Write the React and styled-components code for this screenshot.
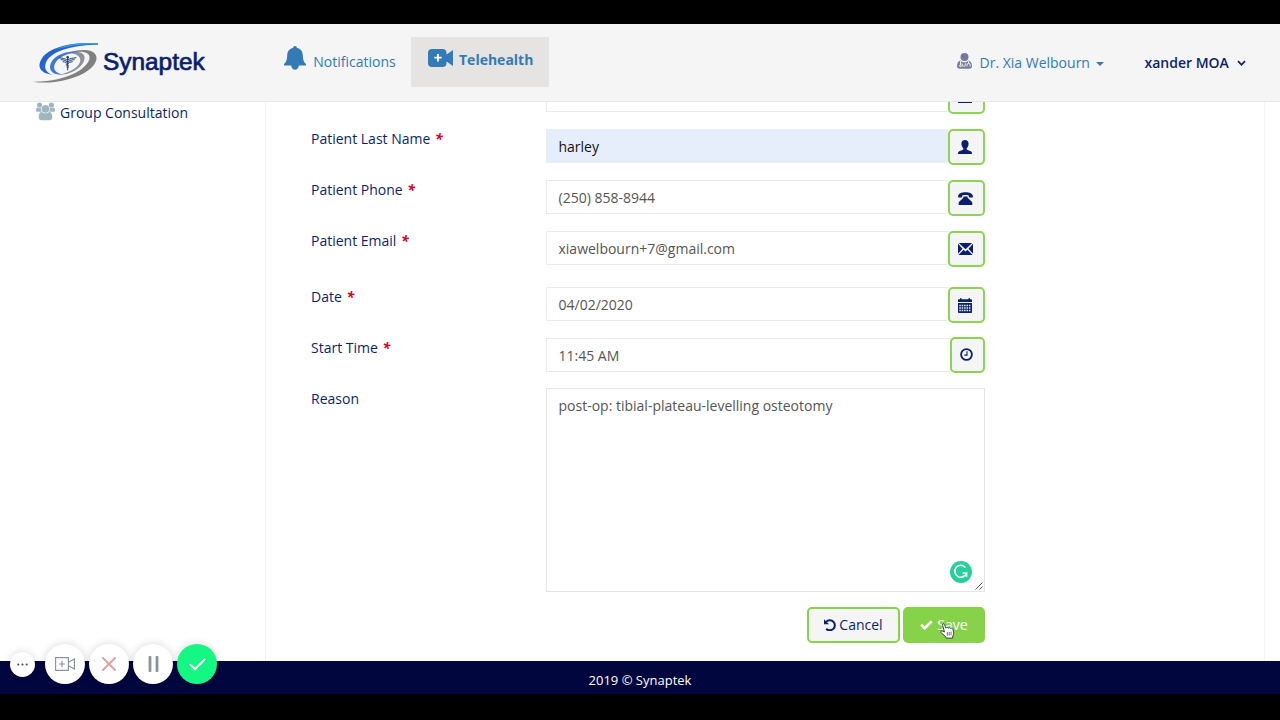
import React from "react";
import styled, { createGlobalStyle } from "styled-components";

const Global = createGlobalStyle`
  * { box-sizing: border-box; }
  body { margin: 0; background: #000; font-family: "Open Sans", "Noto Sans", sans-serif; font-size: 14px; line-height: 20px; color: #0a1f70; }
  svg { display: block; flex: none; }
`;

const Page = styled.div`
  width: 1280px; height: 720px; padding: 24px 0 26px;
  display: flex; flex-direction: column; overflow: hidden; background: #000;
`;
const Header = styled.header`
  height: 78px; flex: none; display: flex; align-items: flex-start;
  background: #f5f5f5; border-bottom: 1px solid #e6e8e8; padding-left: 32px;
`;
const Brand = styled.div`
  display: flex; width: 252px; padding-top: 17px;
`;
const BrandName = styled.span`
  font: 24.4px/42px "Liberation Sans", Arial, sans-serif; color: #0a1f70;
  -webkit-text-stroke: 0.7px #0a1f70; margin-left: 5px;
`;
const NavItem = styled.a`
  display: flex; height: 50px; margin-top: 13px; color: #337ab7;
  width: ${(p) => (p.$active ? 138 : 127)}px;
  padding: ${(p) => (p.$active ? "12px 0 0 17px" : "9px 0 0 0")};
  background: ${(p) => (p.$active ? "#e5e4e2" : "transparent")};
  font-weight: ${(p) => (p.$active ? 700 : 400)};
`;
const NavText = styled.span`
  margin-left: ${(p) => p.$left}px; margin-top: ${(p) => p.$top}px; white-space: nowrap;
`;
const DoctorMenu = styled.div`
  display: flex; margin-left: 408px; margin-top: 29px; width: 187.500px; color: #337ab7;
`;
const DoctorName = styled.span`margin: 0 6px 0 7.500px; white-space: nowrap;`;
const Caret = styled.i`
  width: 0; height: 0; margin-top: 9px; border: 4px solid transparent; border-top-color: #337ab7; border-bottom: 0;
`;
const UserMenu = styled.div`
  display: flex; margin-top: 29px; font-weight: 600; gap: 8px; white-space: nowrap;
`;
const Body = styled.main`
  flex: 1; min-height: 0; display: flex; background: #fff; overflow: hidden;
`;
const Sidebar = styled.aside`
  width: 266px; border-right: 1px solid #f1f1f1; padding-left: 36px;
`;
const SideLink = styled.a`display: flex; gap: 5px; line-height: 22px;`;
const Content = styled.section`
  width: 999px; border-right: 1px solid #f4f4f4; padding-left: 45px;
`;
const Form = styled.form`
  width: 674px; margin-top: -24px; display: flex; flex-direction: column;
`;
const Row = styled.div`
  display: flex; height: ${(p) => p.$h || 51}px; flex: none;
`;
const Label = styled.label`width: 235px; flex: none;`;
const Star = styled.span`
  color: #d8001d; font-weight: 700; font-style: italic; margin-left: 1px;
`;
const Field = styled.div`
  flex: 1; height: 34px; padding: 7px 11.500px 0; border: 1px solid #e9eaec; border-right: 0;
  color: ${(p) => (p.$filled ? "#111" : "#555")};
  background: ${(p) => (p.$filled ? "#e6eefc" : "#fff")};
  ${(p) => p.$filled && "border-color: #e6eefc;"}
`;
const Addon = styled.button`
  width: ${(p) => (p.$narrow ? 35.5 : 37.5)}px; height: 36px; flex: none;
  padding: ${(p) => (p.$narrow ? "0 1px 1px 0" : "0 2px 0 0")};
  margin: ${(p) => (p.$narrow ? "-1px 0 0 0" : "0")};
  border: 2px solid #8dd454; border-radius: 5px; background: #f5f5f5; color: #0a1f70;
  display: flex; align-items: center; justify-content: center;
`;
const TextBox = styled.div`
  position: relative; flex: 1; height: 204px; margin-top: -1px; padding: 6.500px 11.500px; border: 1px solid #e3e5e9; color: #555;
`;
const Assistant = styled.span`position: absolute; right: 12px; bottom: 8px;`;
const Grip = styled.span`position: absolute; right: 1px; bottom: 1px;`;
const Actions = styled.div`
  display: flex; justify-content: flex-end; gap: 3px; margin-top: 15px;
`;
const Action = styled.button`
  position: relative; font: inherit; height: 36px; padding: 0; border-radius: 5px; border: 2px solid #86d34a;
  display: flex; align-items: center; justify-content: center; gap: ${(p) => (p.$primary ? 4 : 3)}px;
  width: ${(p) => (p.$primary ? 82 : 93)}px;
  background: ${(p) => (p.$primary ? "#86d34a" : "#f5f5f5")};
  color: ${(p) => (p.$primary ? "#fff" : "#0a1f70")};
`;
const Pointer = styled.span`position: absolute; left: 35px; top: 14px;`;
const Footer = styled.footer`
  position: relative; height: 33px; flex: none; background: #02063f; color: #fff; text-align: center; line-height: 38px; font-size: 13px;
`;
const Recorder = styled.div`
  position: absolute; left: 10px; top: -17px; display: flex; align-items: center; gap: 4px;
`;
const Round = styled.span`
  width: ${(p) => p.$size || 40}px; height: ${(p) => p.$size || 40}px; border-radius: 50%;
  margin-right: ${(p) => (p.$size ? 6 : 0)}px;
  background: ${(p) => p.$bg || "#fff"}; box-shadow: 0 0 8px rgba(0,0,0,.16);
  display: flex; align-items: center; justify-content: center;
`;

const Logo = () => (
  <svg width="66" height="43" viewBox="36 63 198 129">
    <path d="M38 185C90 194 165 181 206 150C240 124 238 92 195 90C176 89 155 94 139 101C161 95 191 92 203 101C217 112 203 135 182 149C142 176 84 186 38 185Z" fill="#808080" />
    <path d="M139 101C173 88 199 98 193 119C186 145 151 164 118 164C157 156 181 137 181 120C180 104 160 99 139 101Z" fill="#909195" />
    <path d="M235 70C159 64 89 81 67 113C49 139 59 160 98 165C77 157 70 143 80 123C98 89 171 74 235 74Z" fill="#2563d0" />
    <path d="M176 95C137 90 97 108 91 134C86 153 101 165 127 164C105 158 99 148 104 133C111 112 142 99 176 95Z" fill="#3c76dc" />
    <path d="M106 88C137 73 187 66 235 70L235 73C187 72 148 78 106 88Z" fill="#35a1df" />
    <g fill="none" stroke="#234079" strokeWidth="3">
      <path d="M143 113V151M117 113C127 115 135 115 142 121C150 114 159 115 169 113M122 119C130 119 136 121 142 126C149 121 156 119 164 119M128 125C135 125 138 128 142 131C147 127 151 126 158 125" />
      <path d="M137 132C149 134 149 139 139 142M147 130C135 133 137 139 147 142" strokeWidth="2" />
    </g>
    <circle cx="143" cy="112" r="4" fill="#234079" />
  </svg>
);
const Bell = () => (
  <svg width="22" height="24" viewBox="0 0 22 24" fill="currentColor">
    <path d="M11 0c1.200 0 2 .8 1.900 1.900C17 2.600 18.700 5.600 18.800 9.500c.1 4 .8 6.500 3.200 8.500v1.500H14.800c-.2 2.500-1.700 4.200-3.800 4.200s-3.600-1.700-3.800-4.200H0V18c2.400-2 3.100-4.500 3.200-8.500C3.300 5.600 5 2.600 9.100 1.900 9 .8 9.800 0 11 0z" />
  </svg>
);
const CameraPlus = () => (
  <svg width="25" height="18" viewBox="0 0 25 18">
    <path d="M4 0h10.500a4 4 0 0 1 4 4v1.600L25 1v16l-6.500-4.600V14a4 4 0 0 1-4 4H4a4 4 0 0 1-4-4V4a4 4 0 0 1 4-4z" fill="currentColor" />
    <path d="M10 5v7.400M6.300 8.700h7.400" stroke="#fff" strokeWidth="1.800" />
  </svg>
);
const Doctor = () => (
  <svg width="15" height="16" viewBox="0 0 15 16">
    <circle cx="7.500" cy="4" r="4" fill="#75779c" />
    <path d="M3.500 7.400C1 8.200 0 10.300 0 13c0 1.700.9 2.700 2.600 2.700h9.800c1.700 0 2.600-1 2.600-2.700 0-2.700-1-4.800-3.500-5.600-1.200 1.300-2.600 1.800-4 1.800s-2.800-.5-4-1.800z" fill="#7c7e98" />
    <g fill="none" stroke="#f5f5f5" strokeWidth="1"><path d="M3.600 8v4M6.200 13.800L5 10.500M7.500 13.800l1.200-3.400M10 13.400v-1.400a1.600 1.600 0 0 1 3.200 0v1.400M11.600 8v2.400" /><circle cx="3.500" cy="12.800" r=".9" /></g>
  </svg>
);
const Group = () => (
  <svg width="19" height="19" viewBox="0 -.5 19 19" fill="#9fb6c1">
    <circle cx="3.600" cy="2.600" r="2.600" /><circle cx="15.400" cy="2.600" r="2.600" />
    <path d="M0 8.300c0-2 .6-3.200 1.700-3.200.9.700 2.700.9 3.700.2-.6 1.500-.2 3 .6 4H2C.7 9.300 0 9 0 8.300zM19 8.300c0-2-.6-3.200-1.700-3.200-.9.700-2.700.9-3.700.2.600 1.500.2 3-.6 4h4c1.300 0 2-.3 2-1z" />
    <circle cx="9.500" cy="6.400" r="3.800" />
    <path d="M5.600 9.300C3.300 9.800 2.700 12 2.700 14.700c0 2 1 3 2.900 3h7.800c1.900 0 2.900-1 2.900-3 0-2.700-.6-4.900-2.900-5.400-2.300 2-5.500 2-7.800 0z" />
  </svg>
);
const Person = () => (
  <svg width="14" height="14" viewBox="0 0 14 14" fill="currentColor">
    <path d="M7 0c2.300 0 3.600 1.500 3.600 3.800 0 1.900-.8 3.500-1.900 4.500v1.200c1 .7 3.300 1.300 4.500 2.100.6.500.8 1.200.8 2.400H0c0-1.200.2-1.900.8-2.400 1.200-.8 3.500-1.400 4.500-2.100V8.300c-1.100-1-1.900-2.600-1.900-4.500C3.400 1.500 4.700 0 7 0z" />
  </svg>
);
const Phone = () => (
  <svg width="15" height="13" viewBox="0 0 15 13" fill="currentColor">
    <path d="M0 4.500C.4 1.300 3.500.2 7.500.2s7.100 1.100 7.500 4.300c0 .7-.3 1-1 1h-2.300c-.6 0-.9-.3-.9-.9V3.400C8.700 2.800 6.300 2.800 4.200 3.400v1.200c0 .6-.3.900-.9.900H1c-.7 0-1-.3-1-1zM5.400 4.500h4.200v1.200l4.200 4c.4.400.5.700.5 1.200V13H.7v-2.100c0-.5.1-.8.500-1.200l4.200-4z" />
  </svg>
);
const Mail = () => (
  <svg width="15" height="12" viewBox="0 0 15 11" preserveAspectRatio="none" fill="currentColor">
    <path d="M.8 0h13.400L7.500 5.800zM0 .8l4.500 4.500L0 9.900zM15 .8v9.100l-4.500-4.600zM.5 11l5-4.700 2 1.600 2-1.600 5 4.700z" />
  </svg>
);
const Calendar = () => (
  <svg width="14" height="15" viewBox="0 0 14 15">
    <path d="M0 4V2.500C0 1.800.5 1.300 1.200 1.300H2V.8C2 .3 2.300 0 2.800 0s.8.300.8.800v.5h6.800V.8c0-.5.3-.8.8-.8s.8.300.8.800v.5h.8c.7 0 1.200.5 1.200 1.200V4zM0 5h14v9.200c0 .5-.3.800-.8.800H.8c-.5 0-.8-.3-.8-.8z" fill="currentColor" />
    <path d="M1.300 7.500h11.400M1.300 10h11.400M1.300 12.500h11.400" stroke="#f5f5f5" strokeWidth="1.400" strokeDasharray="1.500 .9" />
  </svg>
);
const Clock = () => (
  <svg width="13" height="13" viewBox="0 0 13 13" fill="none" stroke="currentColor">
    <circle cx="6.500" cy="6.500" r="5.400" strokeWidth="1.800" /><path d="M7 3.200v3.900H4.300" strokeWidth="1.100" />
  </svg>
);
const Undo = () => (
  <svg width="12" height="12" viewBox="0 0 12 12" fill="none" stroke="currentColor">
    <path d="M2.200 2.900A5 5 0 1 1 2.200 9.700" strokeWidth="2" /><path d="M0 .3v5h5z" fill="currentColor" stroke="none" />
  </svg>
);
const Check = () => (
  <svg width="13" height="10" viewBox="0 0 13 10"><path d="M1.200 4.800l3.500 3.400L11.700 1.300" fill="none" stroke="#fff" strokeWidth="2.700" /></svg>
);
const Hand = () => (
  <svg width="15" height="16" viewBox="0 0 15 16">
    <path d="M4.500 9L2.600 2.200C2.200.7 4 .2 4.500 1.600L5.900 5.200C6.500 4 8 4.100 8.300 5.200 9 4.200 10.500 4.500 10.700 5.600c1-.8 2.100-.2 2.300.9l.7 3.300c.2 1.200-.3 2-.8 3l-.3 2.300H6.100L5.700 13.600 1.200 9.900C-.1 8.600 1.300 7.300 2.700 8.200z" fill="#fff" stroke="#333" strokeWidth=".9" />
    <path d="M7.300 9v3.700M9.200 8.900v3.700M11 8.700v3.700" stroke="#333" strokeWidth=".7" />
  </svg>
);

const ROWS = [
  { id: "first", value: "", icon: <Person /> },
  { id: "last", label: "Patient Last Name", value: "harley", icon: <Person />, filled: true },
  { id: "phone", label: "Patient Phone", value: "(250) 858-8944", icon: <Phone /> },
  { id: "email", label: "Patient Email", value: "xiawelbourn+7@gmail.com", icon: <Mail />, h: 56 },
  { id: "date", label: "Date", value: "04/02/2020", icon: <Calendar /> },
  { id: "time", label: "Start Time", value: "11:45 AM", icon: <Clock />, narrow: true },
];

export default function App() {
  return (
    <Page>
      <Global />
      <Header>
        <Brand><Logo /><BrandName>Synaptek</BrandName></Brand>
        <NavItem><Bell /><NavText $top={6} $left={7.3}>Notifications</NavText></NavItem>
        <NavItem $active><CameraPlus /><NavText $top={1} $left={6}>Telehealth</NavText></NavItem>
        <DoctorMenu><Doctor /><DoctorName>Dr. Xia Welbourn</DoctorName><Caret /></DoctorMenu>
        <UserMenu>
          xander MOA
          <svg width="9" height="20" viewBox="0 0 9 20"><path d="M1 8.200l3.500 3.600L8 8.200" fill="none" stroke="#0a1f70" strokeWidth="1.700" /></svg>
        </UserMenu>
      </Header>
      <Body>
        <Sidebar><SideLink><Group />Group Consultation</SideLink></Sidebar>
        <Content>
          <Form>
            {ROWS.map((r) => (
              <Row key={r.id} $h={r.h}>
                <Label>{r.label && <>{r.label} <Star>*</Star></>}</Label>
                <Field $filled={r.filled}>{r.value}</Field>
                <Addon type="button" $narrow={r.narrow}>{r.icon}</Addon>
              </Row>
            ))}
            <Row $h={203}>
              <Label>Reason</Label>
              <TextBox>
                post-op: tibial-plateau-levelling osteotomy
                <Assistant>
                  <svg width="22" height="22" viewBox="0 0 22 22">
                    <circle cx="11" cy="11" r="11" fill="#25d09a" />
                    <path d="M15.400 6.500A6 6 0 1 0 16.500 12h-4M16.600 11.500v4.300" fill="none" stroke="#fff" strokeWidth="1.600" />
                  </svg>
                </Assistant>
                <Grip><svg width="8" height="8" viewBox="0 0 8 8"><path d="M.5 7.500l7-7M4.500 7.500l3-3" stroke="#555" /></svg></Grip>
              </TextBox>
            </Row>
            <Actions>
              <Action type="button"><Undo />Cancel</Action>
              <Action type="button" $primary><Check />Save<Pointer><Hand /></Pointer></Action>
            </Actions>
          </Form>
        </Content>
      </Body>
      <Footer>
        2019 © Synaptek
        <Recorder>
          <Round $size={25}><svg width="11" height="3" viewBox="0 0 11 3" fill="#444"><circle cx="1.300" cy="1.500" r="1" /><circle cx="5.500" cy="1.500" r="1" /><circle cx="9.700" cy="1.500" r="1" /></svg></Round>
          <Round>
            <svg width="20" height="14" viewBox="0 0 20 14" fill="none" stroke="#8b949c" strokeWidth="1.200"><path d="M.6.600h12.800v12.800H.6zM13.400 5.300l6-3.300v10l-6-3.300M7 4v6M4 7h6" /></svg>
          </Round>
          <Round><svg width="14" height="14" viewBox="0 0 14 14"><path d="M1 1l12 12M13 1L1 13" stroke="#e0a0a6" strokeWidth="2" strokeLinecap="round" /></svg></Round>
          <Round><svg width="11" height="16" viewBox="0 0 11 16"><path d="M2 1.200v13.600M9 1.200v13.600" stroke="#8b949c" strokeWidth="2.800" strokeLinecap="round" /></svg></Round>
          <Round $bg="#14f783"><svg width="17" height="13" viewBox="0 0 17 13"><path d="M1.500 6.800l4.500 4.500L15.500 1.500" fill="none" stroke="#fff" strokeWidth="2" strokeLinecap="round" /></svg></Round>
        </Recorder>
      </Footer>
    </Page>
  );
}
